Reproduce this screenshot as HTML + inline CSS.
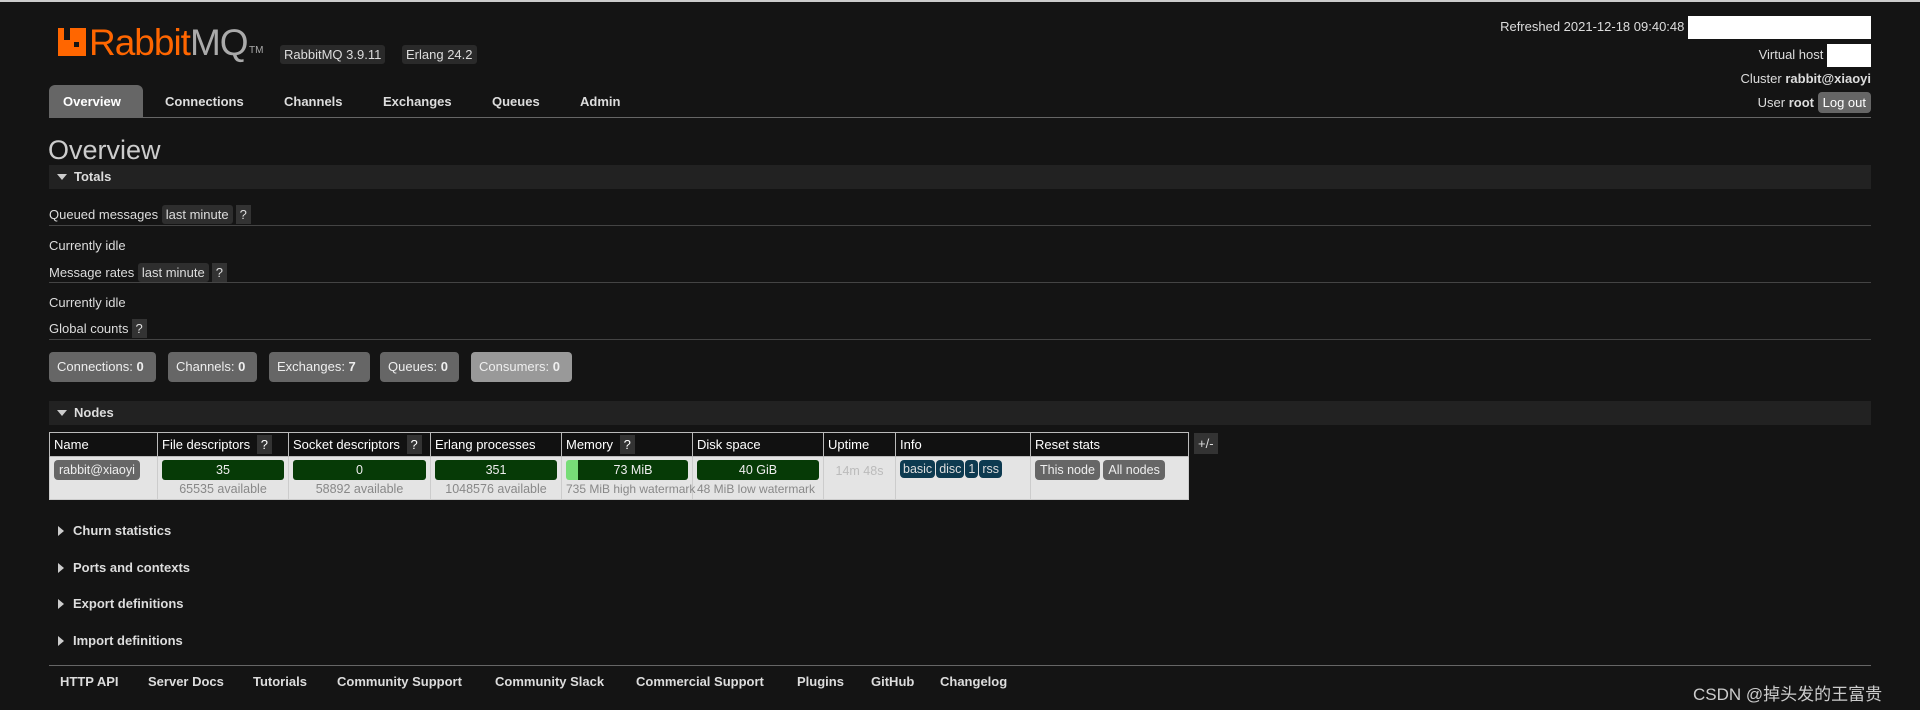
<!DOCTYPE html>
<html><head><meta charset="utf-8"><style>
*{margin:0;padding:0;box-sizing:border-box}
body{width:1920px;height:710px;background:#141414;color:#ddd;font-family:"Liberation Sans",sans-serif;font-size:13px;position:relative;overflow:hidden}
.a{position:absolute;white-space:nowrap}
.b{font-weight:bold}
.tag{background:#2a2a2a;padding:2px 4px;border-radius:3px}
.bar{position:absolute;left:49px;width:1822px;background:#222;font-weight:bold;color:#ddd;padding-left:25px;line-height:24px}
.bar:before{content:"";position:absolute;left:8px;top:9px;border-left:5px solid transparent;border-right:5px solid transparent;border-top:6px solid #ccc}
.hl{position:absolute;left:49px;width:1822px;height:1px;background:#444}
.cnt{position:absolute;top:353px;height:30px;background:#666;border-radius:4px;color:#eee;line-height:30px;padding:0 8px;font-size:13px}
.q{background:#333;padding:2px 4px;margin-left:3px}
table{position:absolute;left:49px;top:433px;border-collapse:collapse;width:1139px;table-layout:fixed}
th{background:#111;color:#fff;text-align:left;font-weight:normal;height:24px;border:1px solid #bbb;padding:0 4px;font-size:13px;white-space:nowrap}
td{background:#e4e4e4;height:41px;border:1px solid #ccc;vertical-align:top;padding:3px 4px;color:#888;text-align:center;font-size:12.5px;white-space:nowrap;overflow:visible}
.g{background:#063a06;color:#eee;border-radius:3px;height:20px;line-height:20px;margin-bottom:2px}
.pill{display:inline-block;background:#666;color:#eee;border-radius:4px;padding:3px 5px}
.inf{display:inline-block;background:#0d3a50;color:#ddd;border-radius:4px;padding:2px 3px;margin-right:1px}
.ex{position:absolute;left:58px;font-weight:bold;padding-left:15px}
.ex:before{content:"";position:absolute;left:0;top:3px;border-top:5px solid transparent;border-bottom:5px solid transparent;border-left:6px solid #ccc}
.f{position:absolute;top:674px;font-weight:bold;font-size:13px}
</style></head><body>
<div class="a" style="left:0;top:0;width:1920px;height:2px;background:#ccc"></div>
<div class="a" style="left:58px;top:28px;width:28px;height:28px;background:#f60"></div>
<div class="a" style="left:64px;top:28px;width:6px;height:12px;background:#141414"></div>
<div class="a" style="left:74px;top:42px;width:5px;height:5px;background:#141414"></div>
<div class="a" style="left:89px;top:22px;font-size:37px;color:#f60;letter-spacing:-1px">Rabbit<span style="color:#aaa">MQ</span></div>
<div class="a" style="left:249px;top:45px;font-size:10px;color:#aaa">TM</div>
<div class="a tag" style="left:280px;top:45px">RabbitMQ 3.9.11</div>
<div class="a tag" style="left:402px;top:45px">Erlang 24.2</div>
<div class="a" style="left:49px;top:85px;width:94px;height:33px;background:#666;border-radius:6px 6px 0 0"></div>
<div class="a b" style="left:63px;top:94px;color:#fff">Overview</div>
<div class="a b" style="left:165px;top:94px">Connections</div>
<div class="a b" style="left:284px;top:94px">Channels</div>
<div class="a b" style="left:383px;top:94px">Exchanges</div>
<div class="a b" style="left:492px;top:94px">Queues</div>
<div class="a b" style="left:580px;top:94px">Admin</div>
<div class="hl" style="top:117px;background:#666"></div>
<div class="a" style="right:49px;top:16px">Refreshed 2021-12-18 09:40:48 <span style="display:inline-block;width:183px;height:23px;background:#fff;vertical-align:middle"></span></div>
<div class="a" style="right:49px;top:44px">Virtual host <span style="display:inline-block;width:44px;height:23px;background:#fff;vertical-align:middle"></span></div>
<div class="a" style="right:49px;top:71px">Cluster <b>rabbit@xiaoyi</b></div>
<div class="a" style="right:49px;top:92px">User <b>root</b> <span style="display:inline-block;background:#666;border-radius:4px;padding:3px 5px;color:#fff">Log out</span></div>
<div class="a" style="left:48px;top:135px;font-size:27px;color:#ccc">Overview</div>
<div class="bar" style="top:165px">Totals</div>
<div class="a" style="left:49px;top:207px">Queued messages <span class="tag" style="background:#2e2e2e">last minute</span><span class="q">?</span></div>
<div class="hl" style="top:225px"></div>
<div class="a" style="left:49px;top:238px">Currently idle</div>
<div class="a" style="left:49px;top:265px">Message rates <span class="tag" style="background:#2e2e2e">last minute</span><span class="q">?</span></div>
<div class="hl" style="top:282px"></div>
<div class="a" style="left:49px;top:295px">Currently idle</div>
<div class="a" style="left:49px;top:321px">Global counts<span class="q">?</span></div>
<div class="hl" style="top:339px"></div>
<div class="cnt" style="left:49px;width:107px;top:352px">Connections: <b>0</b></div>
<div class="cnt" style="left:168px;width:89px;top:352px">Channels: <b>0</b></div>
<div class="cnt" style="left:269px;width:101px;top:352px">Exchanges: <b>7</b></div>
<div class="cnt" style="left:380px;width:79px;top:352px">Queues: <b>0</b></div>
<div class="cnt" style="left:471px;width:101px;background:#999;top:352px">Consumers: <b>0</b></div>
<div class="bar" style="top:401px">Nodes</div>
<table style="top:432px">
<colgroup><col style="width:108px"><col style="width:131px"><col style="width:142px"><col style="width:131px"><col style="width:131px"><col style="width:131px"><col style="width:72px"><col style="width:135px"><col style="width:158px"></colgroup>
<tr><th>Name</th><th>File descriptors <span class="q">?</span></th><th>Socket descriptors <span class="q">?</span></th><th>Erlang processes</th><th>Memory <span class="q">?</span></th><th>Disk space</th><th>Uptime</th><th>Info</th><th>Reset stats</th></tr>
<tr><td style="text-align:left"><span class="pill">rabbit@xiaoyi</span></td><td><div class="g">35</div>65535 available</td><td><div class="g">0</div>58892 available</td><td><div class="g">351</div>1048576 available</td><td style="text-align:left;font-size:12px"><div class="g" style="text-align:center;border-left:12px solid #7d7;font-size:12.5px">73 MiB</div>735 MiB high watermark</td><td style="text-align:left;font-size:12px"><div class="g" style="text-align:center;font-size:12.5px">40 GiB</div>48 MiB low watermark</td><td style="color:#bbb;padding-top:7px">14m 48s</td><td style="text-align:left"><span class="inf">basic</span><span class="inf">disc</span><span class="inf">1</span><span class="inf">rss</span></td><td style="text-align:left"><span class="pill">This node</span> <span class="pill">All nodes</span></td></tr>
</table>
<div class="a" style="left:1194px;top:433px;background:#333;padding:3px 4px;color:#ddd">+/-</div>
<div class="ex" style="top:523px">Churn statistics</div>
<div class="ex" style="top:560px">Ports and contexts</div>
<div class="ex" style="top:596px">Export definitions</div>
<div class="ex" style="top:633px">Import definitions</div>
<div class="hl" style="top:665px;background:#666"></div>
<div class="f" style="left:60px">HTTP API</div>
<div class="f" style="left:148px">Server Docs</div>
<div class="f" style="left:253px">Tutorials</div>
<div class="f" style="left:337px">Community Support</div>
<div class="f" style="left:495px">Community Slack</div>
<div class="f" style="left:636px">Commercial Support</div>
<div class="f" style="left:797px">Plugins</div>
<div class="f" style="left:871px">GitHub</div>
<div class="f" style="left:940px">Changelog</div>
<div class="a" style="left:1693px;top:680px;font-size:17px;color:#ccc;font-family:'Liberation Sans','Noto Sans CJK SC',sans-serif">CSDN @掉头发的王富贵</div>
</body></html>
